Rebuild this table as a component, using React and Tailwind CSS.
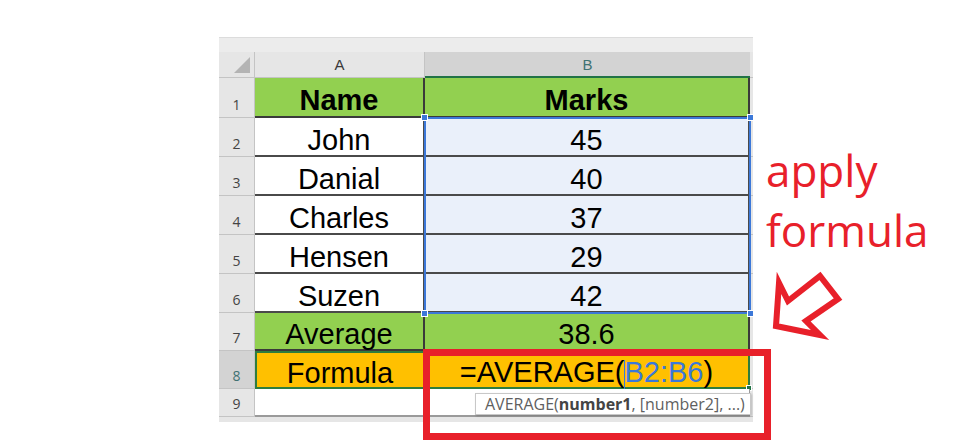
import React from 'react';

const cellFont = { fontFamily: '"Liberation Sans", Arial, sans-serif' };

const rows = [
  { n: '1', a: 'Name', b: 'Marks', h: 'h-[40px]', kind: 'head' },
  { n: '2', a: 'John', b: '45', h: 'h-[39px]', kind: 'sel' },
  { n: '3', a: 'Danial', b: '40', h: 'h-[39px]', kind: 'sel' },
  { n: '4', a: 'Charles', b: '37', h: 'h-[39px]', kind: 'sel' },
  { n: '5', a: 'Hensen', b: '29', h: 'h-[39px]', kind: 'sel' },
  { n: '6', a: 'Suzen', b: '42', h: 'h-[39px]', kind: 'sel' },
  { n: '7', a: 'Average', b: '38.6', h: 'h-[38px]', kind: 'avg' },
  { n: '8', a: 'Formula', b: null, h: 'h-[38px]', kind: 'formula' },
  { n: '9', a: '', b: '', h: 'h-[28px]', kind: 'empty' },
];

const aCell = {
  head: 'bg-[#92d050] font-bold border-r-2 border-b-2 border-[#3a3a3a]',
  sel: 'bg-white border-r-2 border-b-2 border-[#4a4a4a]',
  avg: 'bg-[#92d050] border-r-2 border-b-2 border-[#3a3a3a]',
  formula: 'bg-[#ffc000] border-2 border-[#2e7d3e]',
  empty: 'bg-white border-r border-b-2 border-[#9a9a9a]',
};

const bCell = {
  head: 'bg-[#92d050] font-bold border-r-2 border-b-2 border-[#3a3a3a]',
  sel: 'bg-[#eaf0fa] border-r-2 border-b-2 border-[#4a4a4a]',
  avg: 'bg-[#92d050] border-r-2 border-b-2 border-[#3a3a3a]',
  formula: 'bg-[#ffc000] border-r-2 border-b-2 border-[#2e7d3e]',
  empty: 'bg-white border-r border-b-2 border-[#9a9a9a]',
};

const Handle = ({ className }) => (
  <span className={`absolute w-[7px] h-[7px] bg-[#3c78d8] border border-white ${className}`} />
);

const Sheet = () => (
  <div className="relative mt-[37px] ml-[219px] w-[534px] flex flex-col bg-[#e6e6e6]" style={cellFont}>
    <div className="h-[15px] bg-[#ececec] border-t border-[#dcdcdc]" />
    <div className="h-[26px] flex text-[15px] text-[#3a3a3a]">
      <div className="w-[36px] border-r border-b border-[#c4c4c4] flex items-end justify-end pr-[4px] pb-[4px]">
        <svg width="16" height="16" viewBox="0 0 16 16">
          <polygon points="16,0 16,16 0,16" fill="#b4b4b4" />
        </svg>
      </div>
      <div className="w-[170px] border-r border-b border-[#c4c4c4] flex items-center justify-center pt-[2px]">A</div>
      <div className="w-[325px] bg-[#d3d3d3] border-b-2 border-[#217346] flex items-center justify-center pt-[2px] text-[#3f7272]">
        B
      </div>
      <div className="w-[3px] border-b border-[#c4c4c4]" />
    </div>
    {rows.map((r) => (
      <div key={r.n} className={`${r.h} flex text-[29px] text-black`}>
        <div
          className={`w-[36px] border-r border-b border-[#c4c4c4] flex items-end justify-center pb-[5px] text-[14px] leading-none ${
            r.kind === 'formula' ? 'bg-[#d3d3d3] text-[#3f7272]' : 'text-[#444]'
          }`}
          style={{ fontFamily: '"Open Sans", sans-serif' }}
        >
          {r.n}
        </div>
        <div className={`w-[170px] flex items-center justify-center pt-[8px] ${aCell[r.kind]}`}>{r.a}</div>
        <div className={`relative w-[325px] flex items-center justify-center pt-[8px] ${bCell[r.kind]}`}>
          {r.kind === 'formula' ? (
            <span className="whitespace-nowrap">
              =AVERAGE(
              <span className="inline-block w-px h-[30px] bg-[#3c78d8] align-middle -mr-px" />
              <span className="text-[#3c78d8]">B2:B6</span>)
              <span className="absolute -right-[4px] -bottom-[4px] w-[6px] h-[6px] bg-[#217346] border border-white" />
            </span>
          ) : (
            r.b
          )}
        </div>
        <div className="w-[3px] border-b border-[#c4c4c4]" />
      </div>
    ))}
    <div className="h-[5px] bg-[#e6e6e6]" />

    <div className="absolute left-[205px] top-[80px] w-[327px] h-[197px] border-2 border-[#3c78d8]">
      <Handle className="-left-[5px] -top-[5px]" />
      <Handle className="-right-[5px] -top-[5px]" />
      <Handle className="-left-[5px] -bottom-[5px]" />
      <Handle className="-right-[5px] -bottom-[5px]" />
    </div>
  </div>
);

const Arrow = () => (
  <svg width="85" height="80" viewBox="0 0 85 80" className="mt-[5px]">
    <polygon
      points="10,61 13,18 22,36 54,11 72,34 40,56 54,70"
      fill="none"
      stroke="#e8202a"
      strokeWidth="6"
      strokeLinejoin="miter"
    />
  </svg>
);

export default function App() {
  return (
    <div className="relative w-[964px] h-[447px] bg-white overflow-hidden flex items-start">
      <Sheet />
      <div className="ml-[13px] pt-[140px] flex flex-col">
        <div
          className="text-[44px] leading-[60px] text-[#e8202a]"
          style={{ fontFamily: '"Open Sans", sans-serif' }}
        >
          <div>apply</div>
          <div>formula</div>
        </div>
        <Arrow />
      </div>

      <div className="absolute left-[423px] top-[349px] w-[348px] h-[91px] border-[7px] border-[#e8202a]" />
      <div
        className="absolute left-[475px] top-[393px] w-[276px] h-[22px] bg-white border border-[#c8c8c8] shadow-[1px_1px_2px_rgba(0,0,0,0.2)] flex items-center pl-[9px] text-[16px] text-[#5f5f5f] whitespace-nowrap"
        style={{ fontFamily: '"Open Sans", sans-serif' }}
      >
        AVERAGE(<span className="font-bold text-[#444]">number1</span>, [number2], ...)
      </div>
    </div>
  );
}
